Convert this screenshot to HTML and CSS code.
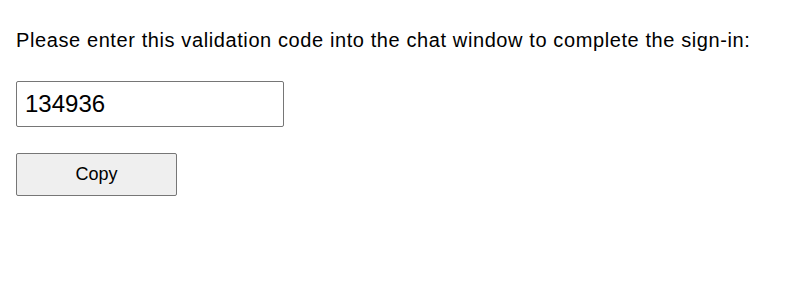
FILE: index.html
```html
<!DOCTYPE html>
<html lang="en">
<head>
  <meta charset="UTF-8" />
  <meta name="viewport" content="width=device-width, initial-scale=1.0" />
  <title>Validation Code</title>
  <link rel="stylesheet" href="styles.css">
</head>
<body>
  <div class="page">
    <p class="prompt">Please enter this validation code into the chat window to complete the sign-in:</p>
    <input class="code-box" type="text" value="134936" readonly />
    <button class="copy-button">Copy</button>
  </div>
</body>
</html>
```

FILE: styles.css
```css
body {
  font-family: "Liberation Sans", Arial, sans-serif;
  margin: 0;
  background-color: white;
  color: black;
}
.page {
  padding: 16px;
}
.prompt {
  font-size: 20px;
  letter-spacing: 0.6px;
  margin: 13px 0 29px 0;
}
.code-box {
  display: block;
  box-sizing: border-box;
  width: 268px;
  height: 46px;
  padding: 0 8px;
  margin: 0;
  font-family: "Liberation Sans", Arial, sans-serif;
  font-size: 24px;
  color: black;
  border: 1px solid #767676;
  border-radius: 2px;
  background: white;
}
.copy-button {
  display: block;
  box-sizing: border-box;
  width: 161px;
  height: 43px;
  margin-top: 26px;
  font-family: "Liberation Sans", Arial, sans-serif;
  font-size: 18px;
  color: black;
  background-color: #efefef;
  border: 1px solid #767676;
  border-radius: 2px;
}
```
